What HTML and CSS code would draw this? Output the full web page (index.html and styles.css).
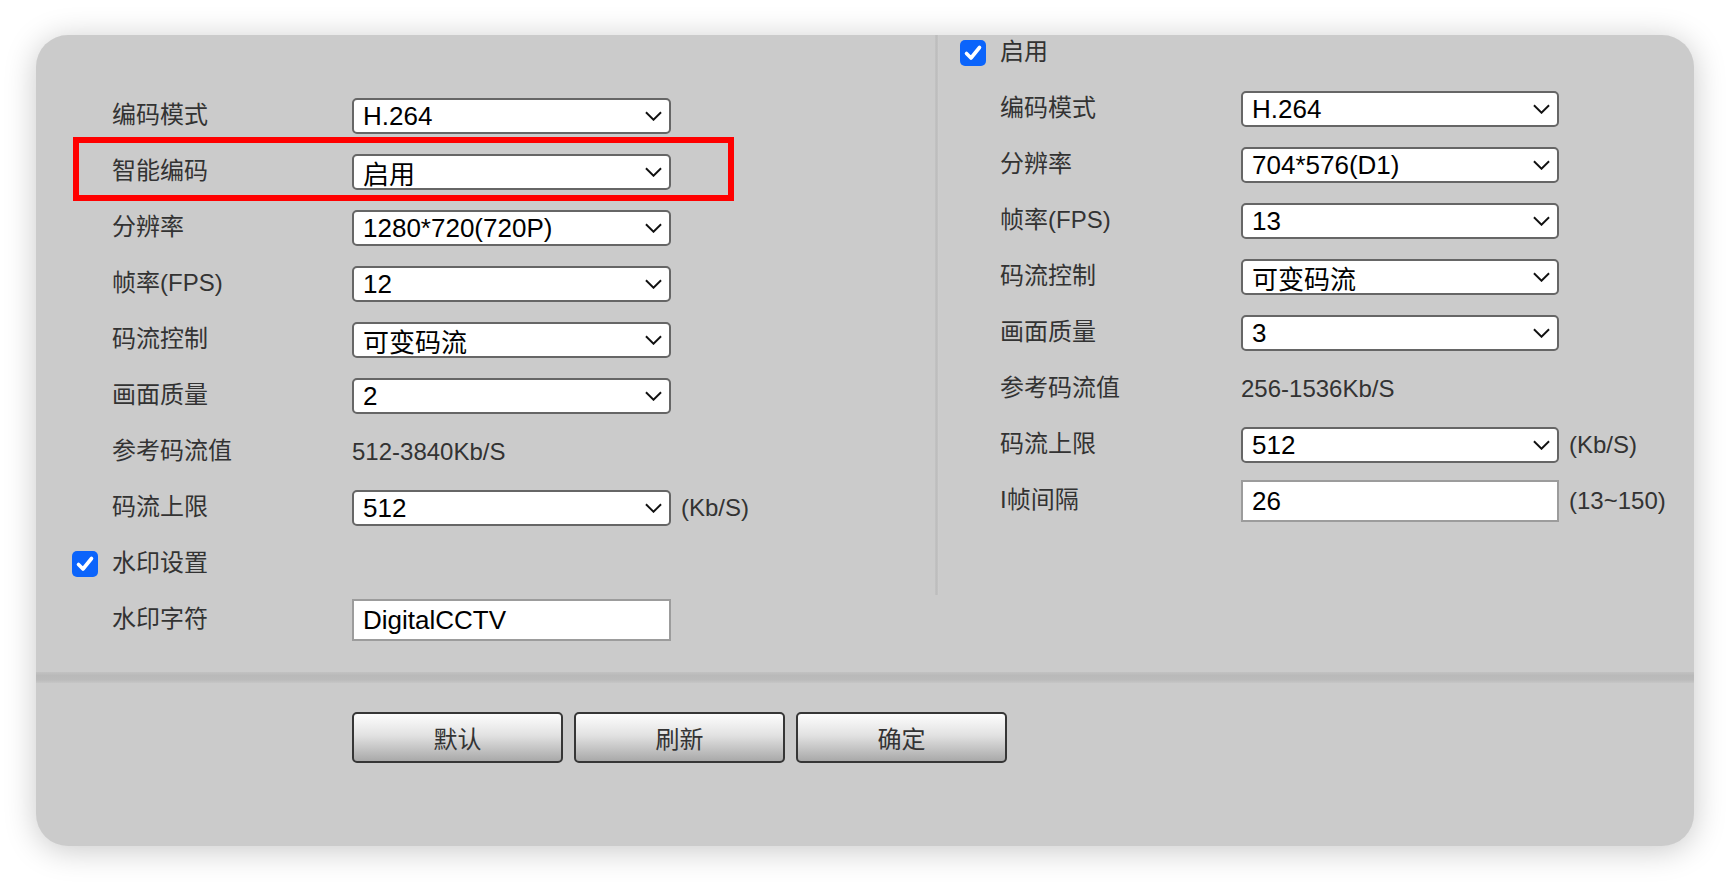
FILE: index.html
```html
<!DOCTYPE html>
<html lang="zh-CN">
<head>
    <meta charset="UTF-8">
    <title>编码设置</title>
    <link rel="stylesheet" href="styles.css">
</head>
<body>
    <div class="panel">
        <div class="form-area">
            <section class="stream main-stream">
                <div class="row">
                    <span class="label">编码模式</span>
                    <div class="select"><span>H.264</span><svg class="chevron" viewBox="0 0 18 10"><path d="M1 1 L9 9 L17 1"/></svg></div>
                </div>
                <div class="row marked">
                    <span class="label">智能编码</span>
                    <div class="select"><span>启用</span><svg class="chevron" viewBox="0 0 18 10"><path d="M1 1 L9 9 L17 1"/></svg></div>
                </div>
                <div class="row">
                    <span class="label">分辨率</span>
                    <div class="select"><span>1280*720(720P)</span><svg class="chevron" viewBox="0 0 18 10"><path d="M1 1 L9 9 L17 1"/></svg></div>
                </div>
                <div class="row">
                    <span class="label">帧率(FPS)</span>
                    <div class="select"><span>12</span><svg class="chevron" viewBox="0 0 18 10"><path d="M1 1 L9 9 L17 1"/></svg></div>
                </div>
                <div class="row">
                    <span class="label">码流控制</span>
                    <div class="select"><span>可变码流</span><svg class="chevron" viewBox="0 0 18 10"><path d="M1 1 L9 9 L17 1"/></svg></div>
                </div>
                <div class="row">
                    <span class="label">画面质量</span>
                    <div class="select"><span>2</span><svg class="chevron" viewBox="0 0 18 10"><path d="M1 1 L9 9 L17 1"/></svg></div>
                </div>
                <div class="row">
                    <span class="label">参考码流值</span>
                    <span class="value">512-3840Kb/S</span>
                </div>
                <div class="row">
                    <span class="label">码流上限</span>
                    <div class="select"><span>512</span><svg class="chevron" viewBox="0 0 18 10"><path d="M1 1 L9 9 L17 1"/></svg></div>
                    <span class="unit">(Kb/S)</span>
                </div>
                <div class="row check-row">
                    <span class="checkbox"><svg viewBox="0 0 26 26"><path d="M6.5 13.5 L11 18 L19.5 7.5"/></svg></span>
                    <span class="label">水印设置</span>
                </div>
                <div class="row">
                    <span class="label">水印字符</span>
                    <div class="text-input">DigitalCCTV</div>
                </div>
            </section>

            <div class="divider"></div>

            <section class="stream sub-stream">
                <div class="row check-row top-check">
                    <span class="checkbox"><svg viewBox="0 0 26 26"><path d="M6.5 13.5 L11 18 L19.5 7.5"/></svg></span>
                    <span class="label">启用</span>
                </div>
                <div class="row">
                    <span class="label">编码模式</span>
                    <div class="select"><span>H.264</span><svg class="chevron" viewBox="0 0 18 10"><path d="M1 1 L9 9 L17 1"/></svg></div>
                </div>
                <div class="row">
                    <span class="label">分辨率</span>
                    <div class="select"><span>704*576(D1)</span><svg class="chevron" viewBox="0 0 18 10"><path d="M1 1 L9 9 L17 1"/></svg></div>
                </div>
                <div class="row">
                    <span class="label">帧率(FPS)</span>
                    <div class="select"><span>13</span><svg class="chevron" viewBox="0 0 18 10"><path d="M1 1 L9 9 L17 1"/></svg></div>
                </div>
                <div class="row">
                    <span class="label">码流控制</span>
                    <div class="select"><span>可变码流</span><svg class="chevron" viewBox="0 0 18 10"><path d="M1 1 L9 9 L17 1"/></svg></div>
                </div>
                <div class="row">
                    <span class="label">画面质量</span>
                    <div class="select"><span>3</span><svg class="chevron" viewBox="0 0 18 10"><path d="M1 1 L9 9 L17 1"/></svg></div>
                </div>
                <div class="row">
                    <span class="label">参考码流值</span>
                    <span class="value">256-1536Kb/S</span>
                </div>
                <div class="row">
                    <span class="label">码流上限</span>
                    <div class="select"><span>512</span><svg class="chevron" viewBox="0 0 18 10"><path d="M1 1 L9 9 L17 1"/></svg></div>
                    <span class="unit">(Kb/S)</span>
                </div>
                <div class="row">
                    <span class="label">I帧间隔</span>
                    <div class="text-input">26</div>
                    <span class="unit">(13~150)</span>
                </div>
            </section>
        </div>

        <div class="band"></div>

        <div class="actions">
            <button class="btn">默认</button>
            <button class="btn">刷新</button>
            <button class="btn">确定</button>
        </div>
    </div>
</body>
</html>
```

FILE: styles.css
```css
*,
*::before,
*::after {
    margin: 0;
    padding: 0;
    box-sizing: border-box;
}

body {
    background: #fff;
    font-family: "Liberation Sans", "Noto Sans CJK SC", sans-serif;
    font-size: 24px;
    color: #333;
    width: 1730px;
    height: 882px;
    overflow: hidden;
}

.panel {
    margin: 35px 36px 36px;
    height: 811px;
    background: #cbcbcb;
    border-radius: 32px;
    box-shadow: 0 4px 32px rgba(0,0,0,0.22);
    display: flex;
    flex-direction: column;
    overflow: hidden;
}

.form-area {
    height: 637px;
    display: flex;
}

.main-stream {
    width: 899px;
    padding: 53px 0 0 76px;
}

.divider {
    width: 4px;
    height: 560px;
    background: linear-gradient(to right, #c3c3c3, #bcbcbc 50%, #d2d2d2);
}

.sub-stream {
    flex: 1;
    padding: 0 0 0 61px;
}

.row {
    display: flex;
    align-items: center;
    height: 56px;
    position: relative;
}

.label {
    width: 240px;
    color: #333;
    white-space: nowrap;
    line-height: 1;
    padding-bottom: 3px;
}

.sub-stream .label {
    width: 241px;
}

.select {
    width: 319px;
    height: 36px;
    background: #fff;
    border: 2px solid #666;
    border-radius: 5px;
    padding-left: 9px;
    display: flex;
    align-items: center;
    justify-content: space-between;
    color: #000;
    font-size: 26px;
}

.sub-stream .select,
.sub-stream .text-input {
    width: 318px;
}

.chevron {
    width: 17px;
    height: 10px;
    margin-right: 7px;
    fill: none;
    stroke: #111;
    stroke-width: 2;
}

.value {
    color: #333;
}

.unit {
    margin-left: 10px;
    color: #333;
}

.text-input {
    width: 319px;
    height: 42px;
    background: #fff;
    border: 2px solid #9c9c9c;
    padding-left: 9px;
    display: flex;
    align-items: center;
    color: #000;
    font-size: 26px;
}

.check-row {
    margin-left: -40px;
}

.check-row .label {
    width: auto;
}

.top-check {
    height: 36px;
    margin-bottom: 10px;
}

.checkbox {
    width: 26px;
    height: 26px;
    border-radius: 5px;
    background: #0b64fb;
    margin-right: 14px;
    display: flex;
}

.checkbox svg {
    width: 26px;
    height: 26px;
    fill: none;
    stroke: #fff;
    stroke-width: 3.6;
    stroke-linecap: round;
    stroke-linejoin: round;
}

/* red highlight around 智能编码 */
.marked::after {
    content: "";
    position: absolute;
    top: -7px;
    left: -39px;
    width: 661px;
    height: 64px;
    border: 6px solid #ff0000;
}

.band {
    height: 11px;
    background: linear-gradient(to bottom, #c2c2c2, #b9b9b9 30%, #bbbbbb 70%, #c6c6c6);
}

.actions {
    display: flex;
    gap: 11px;
    padding: 29px 0 0 316px;
}

.btn {
    width: 211px;
    height: 51px;
    border: 2px solid #363636;
    border-radius: 5px;
    background: linear-gradient(to bottom, #fdfdfd, #e2e2e2 45%, #a9a9a9);
    font-family: "Liberation Sans", "Noto Sans CJK SC", sans-serif;
    font-size: 24px;
    color: #333;
}
```
